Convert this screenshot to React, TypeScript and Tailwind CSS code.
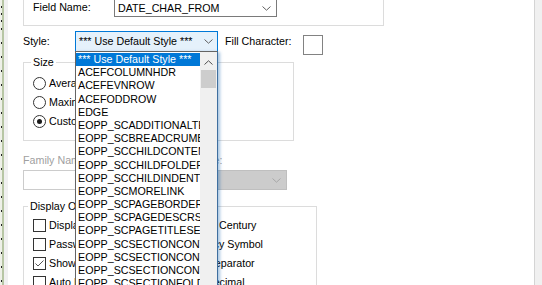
import React from 'react';

const styles = [
  '*** Use Default Style ***',
  'ACEFCOLUMNHDR',
  'ACEFEVNROW',
  'ACEFODDROW',
  'EDGE',
  'EOPP_SCADDITIONALTEXT',
  'EOPP_SCBREADCRUMB',
  'EOPP_SCCHILDCONTENT',
  'EOPP_SCCHILDFOLDER',
  'EOPP_SCCHILDINDENT',
  'EOPP_SCMORELINK',
  'EOPP_SCPAGEBORDER',
  'EOPP_SCPAGEDESCRSTYLE',
  'EOPP_SCPAGETITLESEP',
  'EOPP_SCSECTIONCONTENT',
  'EOPP_SCSECTIONCONTENT2',
  'EOPP_SCSECTIONCONTENT3',
  'EOPP_SCSECTIONFOLDER',
];

const ticks = [6, 13, 20, 28, 42, 56, 70, 84, 98, 112, 126, 140, 154, 168, 182, 196, 210, 224, 238, 252, 266, 280];

function Chevron({ color = '#606060', up = false }: { color?: string; up?: boolean }) {
  return (
    <svg width="9" height="5" viewBox="0 0 9 5" className="shrink-0">
      <path d={up ? 'M0.5 4.5L4.5 0.8L8.5 4.5' : 'M0.5 0.5L4.5 4.2L8.5 0.5'} fill="none" stroke={color} strokeWidth="1" />
    </svg>
  );
}

function Radio({ label, checked = false }: { label: string; checked?: boolean }) {
  return (
    <div className="flex h-[19px] items-center gap-[3px]">
      <span className="flex h-[13px] w-[13px] items-center justify-center rounded-full border border-[#333333] bg-white">
        {checked && <span className="h-[5px] w-[5px] rounded-full bg-[#1a1a1a]" />}
      </span>
      <span>{label}</span>
    </div>
  );
}

function Check({ label, checked = false }: { label: string; checked?: boolean }) {
  return (
    <div className="flex h-[19px] items-center gap-[3px]">
      <span className="flex h-[13px] w-[13px] items-center justify-center border border-[#333333] bg-white">
        {checked && (
          <svg width="11" height="11" viewBox="0 0 11 11">
            <path d="M1.5 5.5L4 8L9.5 2.5" fill="none" stroke="#555555" strokeWidth="1" />
          </svg>
        )}
      </span>
      <span className="whitespace-nowrap">{label}</span>
    </div>
  );
}

function LeftStrip() {
  return (
    <div className="flex h-full w-[8px] shrink-0">
      <svg width="2" height="285" className="bg-[#eef0e8]">
        {ticks.map((y) => (
          <rect key={y} x="1" y={y} width="1" height="2" fill="#222222" />
        ))}
      </svg>
      <div className="h-full w-[2px] bg-[#b7c6a4]" />
      <div className="h-full w-[4px] bg-[#f0f0f0]" />
    </div>
  );
}

export default function App() {
  return (
    <div className="flex h-[285px] w-[542px] overflow-hidden bg-white font-['Liberation_Sans',Arial,sans-serif] text-[10.7px] leading-[13px] text-black">
      <LeftStrip />

      <div className="relative flex-1 bg-white pl-[15px]">
        {/* Field name group (top cut off) */}
        <div className="flex h-[26px] w-[361px] items-start border-x border-b border-[#dcdcdc] pl-[9px]">
          <span className="mt-[1px] w-[81px]">Field Name:</span>
          <div className="-mt-px flex h-[18px] w-[163px] items-center justify-between border border-[#7a7a7a] pl-[3px] pr-[5px]">
            <span>DATE_CHAR_FROM</span>
            <Chevron />
          </div>
        </div>

        {/* Style row */}
        <div className="mt-[5px] flex h-[21px] items-start">
          <span className="w-[52px] self-center">Style:</span>
          <div className="flex h-[21px] w-[143px] items-center justify-between border border-[#0078d7] bg-[#e5f1fb] pl-[3px] pr-[4px]">
            <span className="whitespace-nowrap">*** Use Default Style ***</span>
            <Chevron />
          </div>
          <span className="ml-[7px] w-[78px] self-center">Fill Character:</span>
          <div className="mt-[4px] h-[20px] w-[20px] border border-[#828282]" />
        </div>

        {/* Size group */}
        <div className="relative mt-[10px] h-[79px] w-[271px] border border-[#dcdcdc] pl-[9px] pt-[11px]">
          <span className="absolute left-[7px] top-[-7px] bg-white px-[2px]">Size</span>
          <Radio label="Average" />
          <Radio label="Maximum" />
          <Radio label="Custom" checked />
        </div>

        {/* Family / display name */}
        <div className="mt-[13px] flex gap-[8px]">
          <div className="w-[122px]">
            <div className="text-[#a0a0a0]">Family Name:</div>
            <div className="mt-[3px] h-[20px] border border-[#cccccc] bg-white" />
          </div>
          <div className="w-[134px]">
            <div className="whitespace-nowrap text-[#a0a0a0]">Display Name:</div>
            <div className="mt-[3px] flex h-[20px] items-center justify-end border border-[#bfbfbf] bg-[#cccccc] pr-[5px]">
              <Chevron color="#a8a8a8" />
            </div>
          </div>
        </div>

        {/* Display options group */}
        <div className="relative mt-[16px] h-[100px] w-[294px] border-x border-t border-[#dcdcdc] pl-[9px] pt-[9px]">
          <span className="absolute left-[4px] top-[-7px] bg-white px-[2px]">Display Options</span>
          <div className="grid grid-cols-[132px_1fr]">
            <Check label="Display Time Zone" />
            <Check label="Display Century" />
            <Check label="Password" />
            <Check label="Currency Symbol" />
            <Check label="Show Prompt Button" checked />
            <Check label="1000 Separator" />
            <Check label="Auto Fill" />
            <Check label="Auto Decimal" />
          </div>
        </div>

        {/* Open style dropdown list */}
        <div className="absolute left-[67px] top-[51px] flex h-[240px] w-[143px] border border-[#646464] border-r-[#3f6f9f] bg-white pt-px shadow-[2px_1px_3px_rgba(0,90,170,0.35)]">
          <div className="w-[124px] overflow-hidden">
            {styles.map((s, i) => (
              <div
                key={s}
                className={
                  i === 0
                    ? 'h-[13.2px] whitespace-nowrap bg-[#0078d7] pl-[2px] leading-[13.2px] text-white'
                    : 'h-[13.2px] whitespace-nowrap pl-[2px] leading-[13.2px]'
                }
              >
                {s}
              </div>
            ))}
          </div>
          <div className="-mt-px w-[17px] bg-[#f0f0f0]">
            <div className="flex h-[18px] items-end justify-center pb-[5px]">
              <Chevron up color="#505050" />
            </div>
            <div className="mx-px h-[18px] bg-[#cdcdcd]" />
          </div>
        </div>
      </div>

      <div className="h-full w-[1px] bg-[#d4d4d4]" />
      <div className="h-full w-[7px] bg-[#f0f0f0]" />
    </div>
  );
}
